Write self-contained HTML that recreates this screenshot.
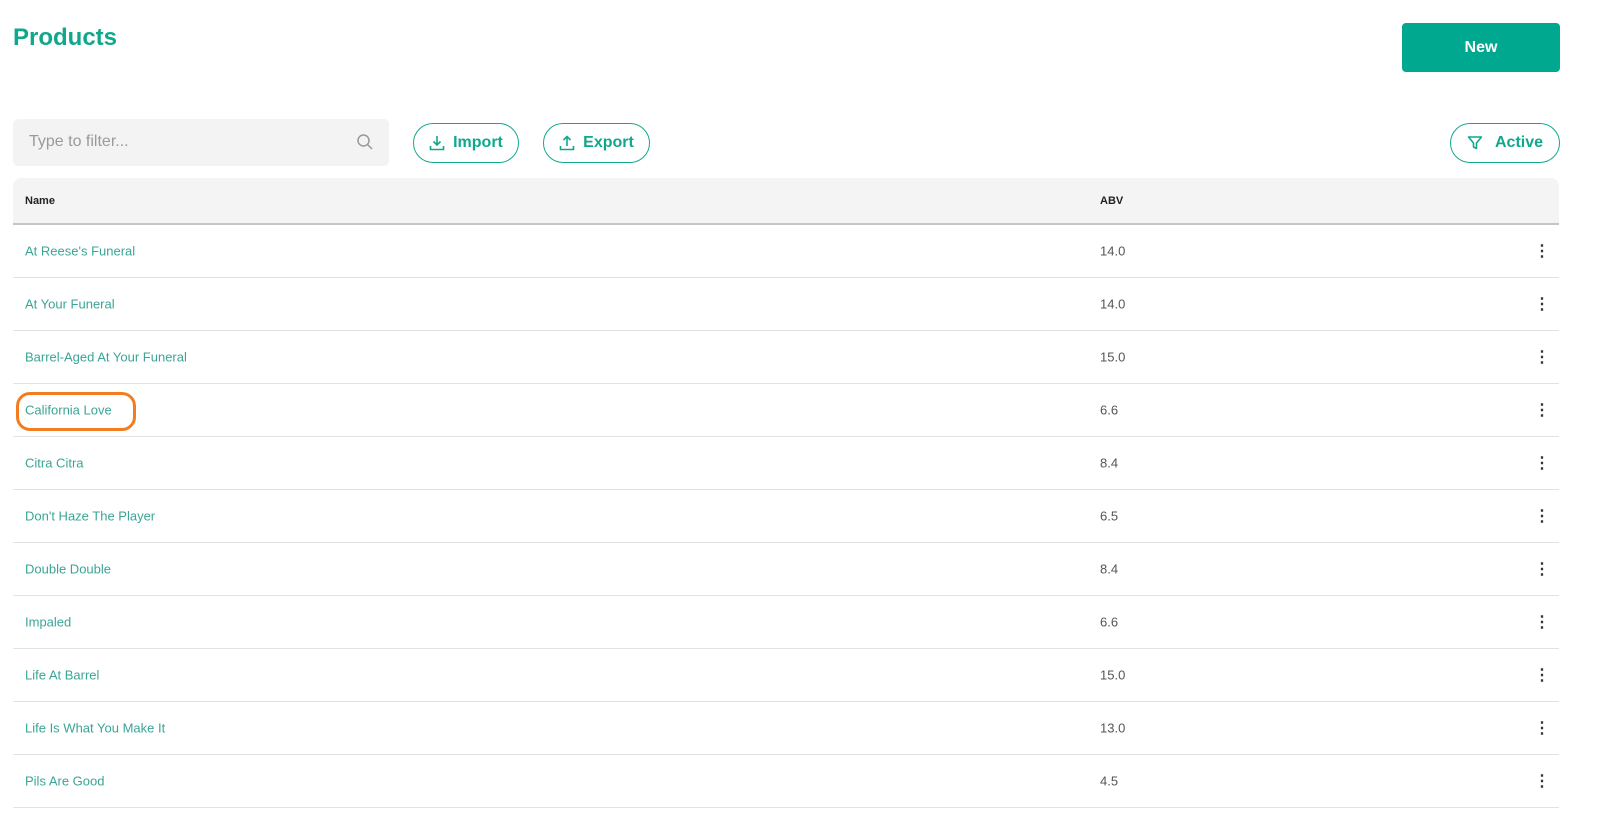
<!DOCTYPE html>
<html><head><meta charset="utf-8"><style>
*{box-sizing:border-box;margin:0;padding:0}
body{width:1600px;height:823px;background:#fff;font-family:"Liberation Sans",sans-serif;position:relative;overflow:hidden}
.title{position:absolute;left:13px;top:24px;font-size:24px;font-weight:bold;color:#10a88c}
.new{position:absolute;left:1402px;top:23px;width:158px;height:49px;background:#00a88f;border-radius:4px;color:#fff;font-weight:bold;font-size:16px;display:flex;align-items:center;justify-content:center}
.search{position:absolute;left:13px;top:119px;width:376px;height:47px;background:#f3f3f3;border-radius:5px;color:#9a9a9a;font-size:16px;padding:14px 16px}
.search svg{position:absolute;right:15px;top:14px}
.btn{position:absolute;top:123px;height:40px;border:1.5px solid #10a88c;border-radius:20px;color:#10a88c;font-weight:bold;font-size:16px;display:flex;align-items:center;justify-content:center;gap:8px}
.table{position:absolute;left:13px;top:178px;width:1546px}
.head{height:47px;background:#f4f4f4;border-radius:8px 8px 0 0;border-bottom:2px solid #c4c4c4;position:relative;font-size:11px;font-weight:bold;color:#222}
.head span,.row span{position:absolute;top:50%;transform:translateY(-50%)}
.row{height:53px;border-bottom:1px solid #e2e2e2;position:relative;font-size:13px}
.n{left:12px;color:#3aa596}
.a{left:1087px;color:#555}
.dots{left:1521px;color:#333;font-weight:bold;font-size:16px}
.head .n{color:#222}.head .a{color:#222}
.circ{position:absolute;left:16px;top:392px;width:120px;height:39px;border:3px solid #f47c20;border-radius:14px}
</style></head><body>
<div class="title">Products</div>
<div class="new">New</div>
<div class="search">Type to filter...<svg width="18" height="18" viewBox="0 0 18 18" fill="none" stroke="#999" stroke-width="1.5"><circle cx="7.5" cy="7.5" r="5.5"/><path d="M11.5 11.5L16 16"/></svg></div>
<div class="btn" style="left:413px;width:106px"><svg width="16" height="16" viewBox="0 0 16 16" fill="none" stroke="#10a88c" stroke-width="1.6"><path d="M8 1v9M4.5 6.5L8 10l3.5-3.5M1.5 11v3.5h13V11"/></svg>Import</div>
<div class="btn" style="left:543px;width:107px"><svg width="16" height="16" viewBox="0 0 16 16" fill="none" stroke="#10a88c" stroke-width="1.6"><path d="M8 11V1.5M4.5 5L8 1.5 11.5 5M1.5 11v3.5h13V11"/></svg>Export</div>
<div class="btn" style="left:1450px;width:110px;gap:12px"><svg width="16" height="16" viewBox="0 0 16 16" fill="none" stroke="#10a88c" stroke-width="1.6" stroke-linejoin="round"><path d="M1.5 2h13L9.5 8v5.5l-3-1.5V8z"/></svg>Active</div>
<div class="table">
<div class="head"><span class="n">Name</span><span class="a">ABV</span></div>
<div class="row"><span class="n">At Reese's Funeral</span><span class="a">14.0</span><span class="dots">⋮</span></div>
<div class="row"><span class="n">At Your Funeral</span><span class="a">14.0</span><span class="dots">⋮</span></div>
<div class="row"><span class="n">Barrel-Aged At Your Funeral</span><span class="a">15.0</span><span class="dots">⋮</span></div>
<div class="row"><span class="n">California Love</span><span class="a">6.6</span><span class="dots">⋮</span></div>
<div class="row"><span class="n">Citra Citra</span><span class="a">8.4</span><span class="dots">⋮</span></div>
<div class="row"><span class="n">Don't Haze The Player</span><span class="a">6.5</span><span class="dots">⋮</span></div>
<div class="row"><span class="n">Double Double</span><span class="a">8.4</span><span class="dots">⋮</span></div>
<div class="row"><span class="n">Impaled</span><span class="a">6.6</span><span class="dots">⋮</span></div>
<div class="row"><span class="n">Life At Barrel</span><span class="a">15.0</span><span class="dots">⋮</span></div>
<div class="row"><span class="n">Life Is What You Make It</span><span class="a">13.0</span><span class="dots">⋮</span></div>
<div class="row"><span class="n">Pils Are Good</span><span class="a">4.5</span><span class="dots">⋮</span></div>
</div>
<div class="circ"></div>
</body></html>
